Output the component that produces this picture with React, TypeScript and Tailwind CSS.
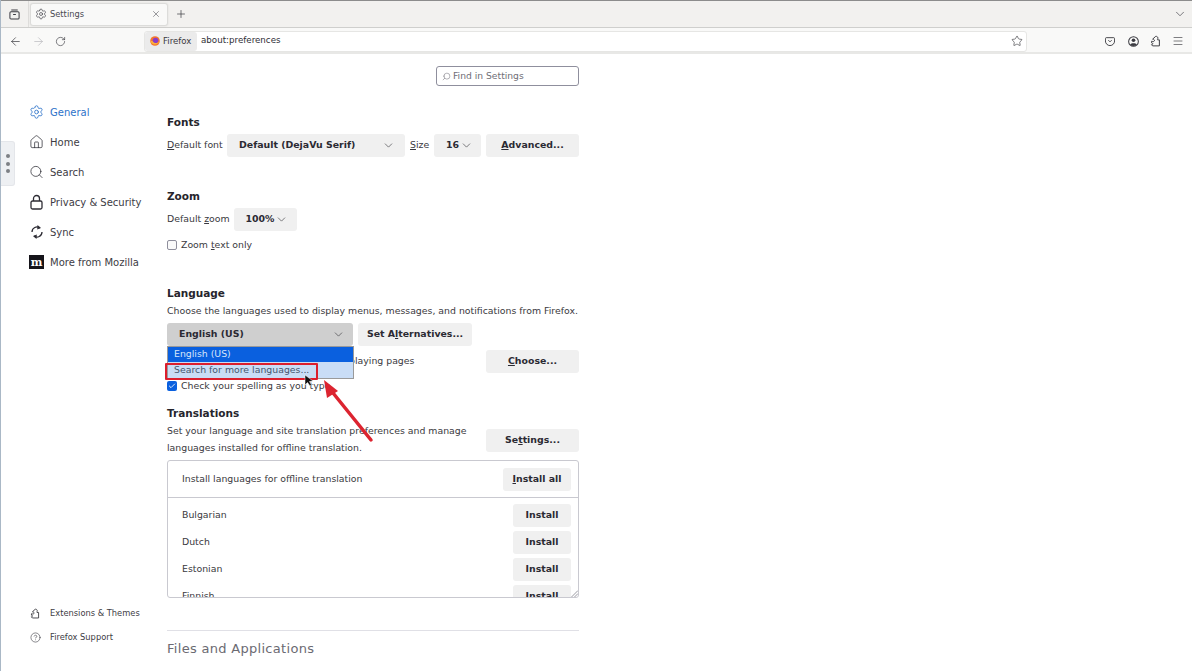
import React from "react";
import { ArrowLeft, ArrowRight, RotateCw, Star, Plus, X, ChevronDown, Settings, Menu, Home, Search, CircleHelp, Check } from "lucide-react";

const Puzzle = ({ s = 16 }: { s?: number }) => (
  <svg width={s} height={s} viewBox="0 0 16 16" fill="none" stroke="#3a3a40" strokeWidth="1.3" strokeLinejoin="round">
    <path d="M3.500 14.500h9V6.500h-2.300c-.8-.6.6-1.400.3-2.800C10.200 2.300 8.900 1.500 7.600 1.800L3.500 5.500c.9.300 2 .2 2.400 1.200.3 1.100-.7 2.200-1.800 2.100-.7 0-1.100-.5-1.800-.6L2 10.300c.8.100 1.700.5 1.700 1.300 0 .9-.9 1.300-1.700 1.300z" />
  </svg>
);

const Btn = ({ children, className = "" }: { children: React.ReactNode; className?: string }) => (
  <div className={`h-[23px] shrink-0 rounded-[3px] bg-[#f0f0f0] flex items-center justify-center font-bold text-[9.400px] text-[#2b2a33] ${className}`}>{children}</div>
);

const Chev = () => <ChevronDown size={13} strokeWidth={1.2} color="#3a3a40" />;

const NavItem = ({ icon, label, active }: { icon: React.ReactNode; label: string; active?: boolean }) => (
  <div className={`h-[30px] flex items-center gap-[6px] text-[10px] ${active ? "text-[#2c72c9]" : "text-[#3d3c44]"}`}>
    <span className="w-[15px] h-[16px] flex items-center justify-center">{icon}</span>
    <span>{label}</span>
  </div>
);

const LangRow = ({ name }: { name: string }) => (
  <div className="h-[27px] flex items-center justify-between pl-[14px] pr-[7px] shrink-0">
    <span>{name}</span>
    <Btn className="w-[58px]">Install</Btn>
  </div>
);

export default function App() {
  return (
    <div className="w-[1192px] h-[671px] overflow-hidden relative bg-white flex flex-col font-['DejaVu_Sans',sans-serif] text-[9.350px] text-[#3a3940] border-l border-[#aab8c6]">
      {/* Tab bar */}
      <div className="h-[28px] shrink-0 bg-[#f2f1ef] border-t border-[#8c8c8c] border-b border-b-[#cfcfcd] flex items-center">
        <div className="w-[28px] h-full flex items-center justify-center border-r border-[#dedddb]">
          <svg width="11" height="11" viewBox="0 0 12 12" fill="none" stroke="#3a3a40" strokeWidth="1.1">
            <rect x="1" y="3" width="10" height="8" rx="1.200" />
            <path d="M2.500 1h7M4.500 6h3" />
          </svg>
        </div>
        <div className="ml-[1px] w-[138px] h-[23px] bg-[#f9f9f8] rounded-[3px] border border-[#dcdcda] shadow-[0_0_2px_rgba(0,0,0,0.1)] flex items-center pl-[4px] pr-[6px] gap-[3px]">
          <Settings size={12} strokeWidth={1.4} color="#45454c" />
          <span className="flex-1 text-[#4b4a52] text-[8.300px]">Settings</span>
          <X size={10} strokeWidth={1.3} color="#45454c" />
        </div>
        <Plus size={12} strokeWidth={1.4} color="#3a3a40" className="ml-[7px]" />
        <div className="flex-1" />
        <ChevronDown size={14} strokeWidth={1.2} color="#45454c" className="mr-[5px]" />
      </div>
      {/* Nav bar */}
      <div className="h-[26px] shrink-0 bg-[#f9f9f8] border-b-2 border-[#e8e8e6] pt-[2px] flex items-center">
        <ArrowLeft size={13} strokeWidth={1.3} color="#3a3a40" className="ml-[8px]" />
        <ArrowRight size={13} strokeWidth={1.2} color="#b4b4b8" className="ml-[10px]" />
        <RotateCw size={11} strokeWidth={1.4} color="#3a3a40" className="ml-[10px]" />
        <div className="ml-[78px] w-[883px] h-[21px] bg-white rounded-[3px] border border-[#e6e6e4] flex items-center">
          <div className="h-full w-[52px] bg-[#ebebeb] rounded-[3px] flex items-center pl-[5px] gap-[3px] text-[8.600px] text-[#3a3940]">
            <svg width="10" height="10" viewBox="0 0 10 10">
              <circle cx="5" cy="5" r="4.800" fill="#f5762a" />
              <circle cx="5.500" cy="4.500" r="2.800" fill="#8a3dc8" />
              <path d="M0.500 5 C1 9 8 10 9.500 5 C8 7.500 4 8 2.500 5z" fill="#fbb03b" />
            </svg>
            <span>Firefox</span>
          </div>
          <span className="ml-[4px] flex-1 text-[8.700px] text-[#2f2e36]">about:preferences</span>
          <Star size={12} strokeWidth={1.3} color="#3a3a40" className="mr-[3px]" />
        </div>
        <div className="flex-1" />
        <svg width="10" height="10" viewBox="0 0 12 12" fill="none" stroke="#3a3a40" strokeWidth="1.100" className="mr-[13px]">
          <path d="M1.500 2h9c.5 0 1 .4 1 1v3a5.500 5.500 0 0 1-11 0V3c0-.6.5-1 1-1z" />
          <path d="M4 5l2 2 2-2" />
        </svg>
        <svg width="11" height="11" viewBox="0 0 12 12" className="mr-[11px]">
          <circle cx="6" cy="6" r="5.300" fill="none" stroke="#3a3a40" strokeWidth="1.100" />
          <circle cx="6" cy="4.600" r="2" fill="#3a3a40" />
          <path d="M2.500 9.500c.8-2 6.200-2 7 0-1.800 1.700-5.200 1.700-7 0z" fill="#3a3a40" />
        </svg>
        <span className="mr-[10px]"><Puzzle s={12} /></span>
        <Menu size={12} strokeWidth={1.3} color="#3a3a40" className="mr-[8px]" />
      </div>
      {/* Content */}
      <div className="flex-1 flex min-h-0">
        <div className="w-[166px] shrink-0 pl-[28px] flex flex-col pt-[43px] pb-[22px]">
          <NavItem active label="General" icon={<Settings size={18} strokeWidth={1.300} color="#2c72c9" />} />
          <NavItem label="Home" icon={<Home size={18} strokeWidth={1.200} color="#2e2d35" />} />
          <NavItem label="Search" icon={<Search size={18} strokeWidth={1.200} color="#2e2d35" />} />
          <NavItem
            label="Privacy & Security"
            icon={
              <svg width="15" height="16" viewBox="0 0 15 16" fill="none" stroke="#2e2d35" strokeWidth="1.300">
                <rect x="2" y="7" width="11" height="8" rx="1.500" />
                <path d="M4.500 7V4.500a3 3 0 0 1 6 0V7" />
              </svg>
            }
          />
          <NavItem
            label="Sync"
            icon={
              <svg width="14" height="16" viewBox="0 0 14 16" fill="none" stroke="#2e2d35" strokeWidth="1.300">
                <path d="M2 8a5 5 0 0 1 8-4M12 8a5 5 0 0 1-8 4" />
                <path d="M7.500 1l3.500 3-3.800 1.500zM6.500 15L3 12l3.800-1.500z" fill="#2e2d35" stroke="none" />
              </svg>
            }
          />
          <NavItem label="More from Mozilla" icon={<span className="w-[15px] h-[14px] bg-[#15141a] text-white flex items-center justify-center font-['DejaVu_Serif',serif] font-bold text-[11px] leading-none">m</span>} />
          <div className="flex-1" />
          <div className="h-[24px] flex items-center gap-[9px] text-[8.300px] text-[#3d3c44]">
            <span className="w-[12px] flex justify-center"><Puzzle s={11} /></span>
            <span>Extensions &amp; Themes</span>
          </div>
          <div className="h-[24px] flex items-center gap-[9px] text-[8.300px] text-[#3d3c44]">
            <span className="w-[12px] flex justify-center"><CircleHelp size={11} strokeWidth={1.300} color="#3a3a40" /></span>
            <span>Firefox Support</span>
          </div>
        </div>
        <main className="w-[412px] shrink-0 flex flex-col">
          <div className="mt-[12px] self-end w-[143px] h-[20px] shrink-0 rounded-[3px] border border-[#8f8f9d] flex items-center pl-[5px] gap-[2px] text-[#6f6e76] text-[9.200px]">
            <Search size={9} strokeWidth={1.400} color="#6f6e76" className="-scale-x-100" />
            <span>Find in Settings</span>
          </div>
          <h2 className="mt-[28px] h-[16px] shrink-0 leading-[16px] font-bold text-[10.500px] text-[#26252c]">Fonts</h2>
          <div className="mt-[4px] flex items-center">
            <span className="w-[60px] shrink-0"><u>D</u>efault font</span>
            <Btn className="w-[178px] !justify-start pl-[12px] pr-[10px]"><span className="flex-1">Default (DejaVu Serif)</span><Chev /></Btn>
            <span className="ml-[5px] w-[24px] shrink-0"><u>S</u>ize</span>
            <Btn className="w-[47px] gap-[1px] pl-[4px]">16 <Chev /></Btn>
            <Btn className="ml-[5px] w-[93px]"><span><u>A</u>dvanced...</span></Btn>
          </div>
          <h2 className="mt-[31px] h-[16px] shrink-0 leading-[16px] font-bold text-[10.500px] text-[#26252c]">Zoom</h2>
          <div className="mt-[4px] flex items-center">
            <span className="w-[67px] shrink-0">Default <u>z</u>oom</span>
            <Btn className="w-[63px] gap-[1px] pl-[3px]">100% <Chev /></Btn>
          </div>
          <label className="mt-[7px] h-[14px] shrink-0 flex items-center gap-[4px]">
            <span className="w-[10px] h-[10px] rounded-[2px] border border-[#8f8f9d] bg-[#fafafa]" />
            <span>Zoom <u>t</u>ext only</span>
          </label>
          <h2 className="mt-[33px] h-[16px] shrink-0 leading-[16px] font-bold text-[10.500px] text-[#26252c]">Language</h2>
          <p className="mt-[2px] h-[16px] shrink-0 leading-[16px] whitespace-nowrap">Choose the languages used to display menus, messages, and notifications from Firefox.</p>
          <div className="mt-[4px] flex items-center">
            <Btn className="w-[186px] !bg-[#cfcfcf] !justify-start pl-[12px] pr-[8px]"><span className="flex-1">English (US)</span><Chev /></Btn>
            <Btn className="ml-[5px] w-[114px]"><span>Set A<u>l</u>ternatives...</span></Btn>
          </div>
          <div className="mt-[4px] flex items-center justify-between">
            <span className="pl-[182px]">playing pages</span>
            <Btn className="w-[93px]"><span><u>C</u>hoose...</span></Btn>
          </div>
          <label className="mt-[6px] h-[14px] shrink-0 flex items-center gap-[4px]">
            <span className="w-[10px] h-[10px] rounded-[2px] bg-[#0a60df] flex items-center justify-center"><Check size={8} strokeWidth={2.500} color="white" /></span>
            <span>Check your spelling as you type</span>
          </label>
          <h2 className="mt-[12px] h-[16px] shrink-0 leading-[16px] font-bold text-[10.500px] text-[#26252c]">Translations</h2>
          <div className="flex items-start justify-between">
            <p className="w-[310px] mt-[1px] leading-[17px]">Set your language and site translation preferences and manage languages installed for offline translation.</p>
            <Btn className="w-[93px] mt-[8px]"><span>Se<u>t</u>tings...</span></Btn>
          </div>
          <div className="mt-[4px] h-[138px] shrink-0 border border-[#c9c9d0] rounded-[3px] overflow-hidden flex flex-col relative">
            <div className="h-[37px] shrink-0 border-b border-[#c9c9d0] flex items-center justify-between pl-[14px] pr-[7px]">
              <span>Install languages for offline translation</span>
              <Btn className="w-[68px]"><span><u>I</u>nstall all</span></Btn>
            </div>
            <div className="h-[4px] shrink-0" />
            <LangRow name="Bulgarian" />
            <LangRow name="Dutch" />
            <LangRow name="Estonian" />
            <LangRow name="Finnish" />
            <svg className="absolute right-0 bottom-0" width="7" height="7" viewBox="0 0 7 7" stroke="#9a9aa2" strokeWidth="1">
              <path d="M0.500 7L7 0.500M3.500 7L7 3.500" />
            </svg>
          </div>
          <div className="mt-[32px] h-px shrink-0 bg-[#e0e0e6]" />
          <h1 className="mt-[8px] text-[13px] leading-[20px] text-[#6b6a72] tracking-[0.3px]">Files and Applications</h1>
        </main>
      </div>

      {/* Sidebar drag handle */}
      <div className="absolute left-0 top-[141px] w-[14px] h-[45px] bg-[#eef0f3] rounded-r-[3px] border border-l-0 border-[#e4e6ea] flex flex-col items-center justify-center gap-[3.500px]">
        <span className="w-[4px] h-[4px] rounded-full bg-[#7d8085]" />
        <span className="w-[4px] h-[4px] rounded-full bg-[#7d8085]" />
        <span className="w-[4px] h-[4px] rounded-full bg-[#7d8085]" />
      </div>

      {/* Open select popup */}
      <div className="absolute left-[166px] top-[346px] w-[187px] h-[33px] border border-[#9a9a9a] bg-[#c9ddf6]">
        <div className="h-[15px] bg-[#0a60df] text-[#d8e6fa] pl-[6px] flex items-center">English (US)</div>
        <div className="h-[16px] pl-[6px] flex items-center text-[#45566e]">Search for more languages...</div>
      </div>

      {/* Annotation */}
      <div className="absolute left-[164px] top-[363px] w-[153px] h-[17px] border-2 border-[#dc1e2d] rounded-[1px]" />
      <svg className="absolute left-[299px] top-[372px]" width="80" height="74" viewBox="0 0 80 74">
        <path d="M71 68 L29 16" stroke="#dc2430" strokeWidth="3.500" strokeLinecap="round" />
        <path d="M24 8 L38 19 L27 26z" fill="#dc2430" />
        <path d="M5 3 L5 13 L7.500 10.500 L10 14 L11.500 13 L9.500 9.500 L13 9z" fill="#111" stroke="#fff" strokeWidth="0.500" />
      </svg>
    </div>
  );
}
